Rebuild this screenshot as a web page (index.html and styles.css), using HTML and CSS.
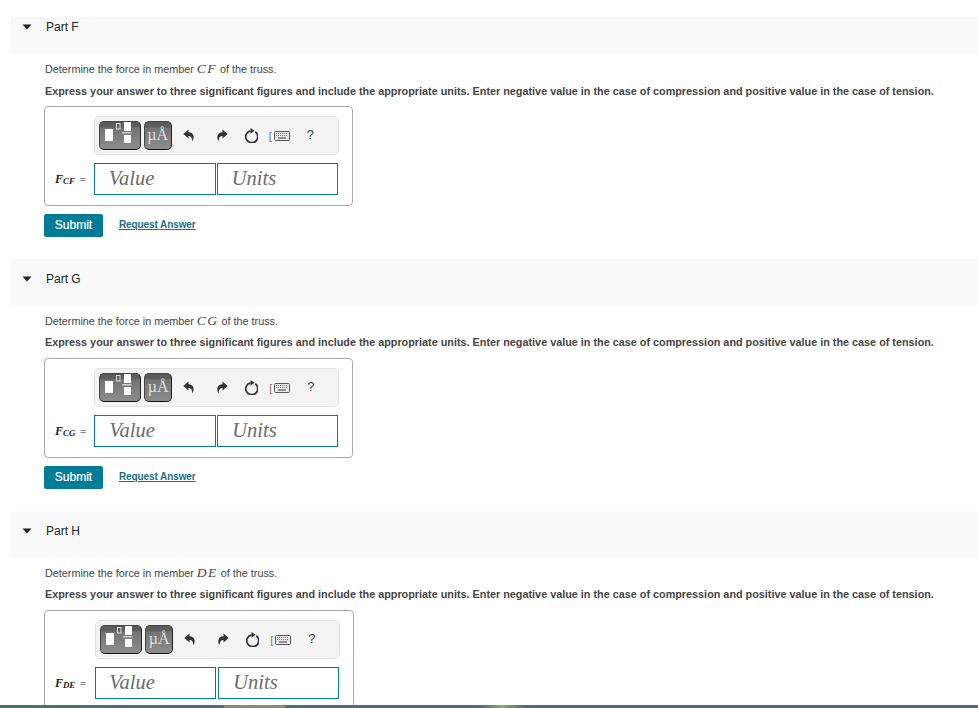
FILE: index.html
```html
<!DOCTYPE html>
<html lang="en">
<head>
<meta charset="utf-8">
<title>Parts F to H</title>
<link rel="stylesheet" href="styles.css">
</head>
<body>
<svg class="defs" width="0" height="0" aria-hidden="true">
  <defs>
    <symbol id="i-tpl" viewBox="0 0 42 29">
      <rect x="6" y="8" width="8" height="12" fill="#fff"/>
      <rect x="17.500" y="2.500" width="3.500" height="5.500" fill="none" stroke="#ddd" stroke-width="1"/>
      <rect x="25" y="1" width="7" height="9" fill="#fff"/>
      <rect x="23" y="11" width="9.500" height="1.500" fill="#ccc"/>
      <rect x="25" y="14" width="7" height="8" fill="#fff"/>
    </symbol>
    <symbol id="i-undo" viewBox="0 0 12 13">
      <path d="M5.500 0.500 0.300 5 5.500 9.500 5.500 7C8 7 9 8.500 9.500 12.500 11.800 8 10.800 3.500 5.500 3.300Z" fill="#333"/>
    </symbol>
    <symbol id="i-redo" viewBox="0 0 12 13">
      <path d="M6.500 0.500 11.700 5 6.500 9.500 6.500 7C4 7 3 8.500 2.500 12.500 0.200 8 1.200 3.500 6.500 3.300Z" fill="#333"/>
    </symbol>
    <symbol id="i-reset" viewBox="0 0 14 15">
      <path d="M11.300 3.800A6 6 0 1 1 6.500 2.800" fill="none" stroke="#333" stroke-width="1.700"/>
      <path d="M6.500 0 6.500 5.800 10.500 2.800Z" fill="#333"/>
    </symbol>
    <symbol id="i-keys" viewBox="0 0 16 10">
      <rect x="0.500" y="0.500" width="15" height="9" rx="1" fill="#e8e8e8" stroke="#555"/>
      <path d="M2 2.500H14M2 4.500H14" stroke="#777" stroke-width="1" stroke-dasharray="1 1"/>
      <path d="M4 7H12" stroke="#555" stroke-width="1.200"/>
    </symbol>
    <symbol id="i-caret" viewBox="0 0 10 6">
      <path d="M0.500 0.500H9.500L5 5.500Z" fill="#222"/>
    </symbol>
  </defs>
</svg>

<main class="page">
  <section class="part part-first">
    <header class="part-head"><svg class="caret"><use href="#i-caret"/></svg><h2 class="part-title">Part F</h2></header>
    <div class="part-body">
      <p class="prompt">Determine the force in member <var class="math">CF</var> of the truss.</p>
      <p class="instr">Express your answer to three significant figures and include the appropriate units. Enter negative value in the case of compression and positive value in the case of tension.</p>
      <div class="answer">
        <div class="toolbar">
          <span class="tool tool-tpl"><svg class="tpl-icon"><use href="#i-tpl"/></svg></span>
          <span class="tool tool-unit">µÅ</span>
          <svg class="ic ic-undo"><use href="#i-undo"/></svg>
          <svg class="ic ic-redo"><use href="#i-redo"/></svg>
          <svg class="ic ic-reset"><use href="#i-reset"/></svg>
          <span class="kbd"><span class="kbd-bracket">[</span><svg class="ic-keys"><use href="#i-keys"/></svg></span>
          <span class="help">?</span>
        </div>
        <label class="lbl"><i class="sym">F</i><i class="sub">CF</i> =</label>
        <div class="inputs"><span class="field field-value">Value</span><span class="field field-units">Units</span></div>
      </div>
      <div class="actions"><button class="submit" type="button">Submit</button><a class="req" href="#">Request Answer</a></div>
    </div>
  </section>

  <section class="part">
    <header class="part-head"><svg class="caret"><use href="#i-caret"/></svg><h2 class="part-title">Part G</h2></header>
    <div class="part-body">
      <p class="prompt">Determine the force in member <var class="math">CG</var> of the truss.</p>
      <p class="instr">Express your answer to three significant figures and include the appropriate units. Enter negative value in the case of compression and positive value in the case of tension.</p>
      <div class="answer">
        <div class="toolbar">
          <span class="tool tool-tpl"><svg class="tpl-icon"><use href="#i-tpl"/></svg></span>
          <span class="tool tool-unit">µÅ</span>
          <svg class="ic ic-undo"><use href="#i-undo"/></svg>
          <svg class="ic ic-redo"><use href="#i-redo"/></svg>
          <svg class="ic ic-reset"><use href="#i-reset"/></svg>
          <span class="kbd"><span class="kbd-bracket">[</span><svg class="ic-keys"><use href="#i-keys"/></svg></span>
          <span class="help">?</span>
        </div>
        <label class="lbl"><i class="sym">F</i><i class="sub">CG</i> =</label>
        <div class="inputs"><span class="field field-value">Value</span><span class="field field-units">Units</span></div>
      </div>
      <div class="actions"><button class="submit" type="button">Submit</button><a class="req" href="#">Request Answer</a></div>
    </div>
  </section>

  <section class="part part-last">
    <header class="part-head"><svg class="caret"><use href="#i-caret"/></svg><h2 class="part-title">Part H</h2></header>
    <div class="part-body">
      <p class="prompt">Determine the force in member <var class="math">DE</var> of the truss.</p>
      <p class="instr">Express your answer to three significant figures and include the appropriate units. Enter negative value in the case of compression and positive value in the case of tension.</p>
      <div class="answer">
        <div class="toolbar">
          <span class="tool tool-tpl"><svg class="tpl-icon"><use href="#i-tpl"/></svg></span>
          <span class="tool tool-unit">µÅ</span>
          <svg class="ic ic-undo"><use href="#i-undo"/></svg>
          <svg class="ic ic-redo"><use href="#i-redo"/></svg>
          <svg class="ic ic-reset"><use href="#i-reset"/></svg>
          <span class="kbd"><span class="kbd-bracket">[</span><svg class="ic-keys"><use href="#i-keys"/></svg></span>
          <span class="help">?</span>
        </div>
        <label class="lbl"><i class="sym">F</i><i class="sub">DE</i> =</label>
        <div class="inputs"><span class="field field-value">Value</span><span class="field field-units">Units</span></div>
      </div>
    </div>
  </section>
</main>
<div class="taskbar"></div>
</body>
</html>
```

FILE: styles.css
```css
* { box-sizing: border-box; }
html, body { margin: 0; padding: 0; height: 708px; overflow: hidden; background: #fff; }
body { font-family: "Liberation Sans", Arial, sans-serif; color: #333; }
.defs { position: absolute; }

.page { padding-top: 17px; padding-left: 11px; }

.part { height: 252px; }
.part-first { height: 242px; }
.part-last { height: 197px; overflow: hidden; }

.part-head {
  height: 47px;
  background: #f9f9f9;
  display: flex;
  align-items: flex-start;
  padding: 13px 0 0 11px;
}
.part-first .part-head { height: 37px; padding-top: 3px; }

.caret { width: 10px; height: 6px; margin-top: 4px; }
.part-title { margin: 0 0 0 14px; font-size: 12px; line-height: 15px; font-weight: 400; color: #222; }

.part-body { padding: 7px 0 0 33px; }

.prompt { margin: 0; height: 22px; font-size: 10.800px; line-height: 15px; color: #444; padding-left: 1px; }
.math { font-family: "Liberation Serif", serif; font-style: italic; font-size: 13.500px; letter-spacing: 1.500px; }
.instr { margin: 0; height: 23px; font-size: 10.800px; letter-spacing: 0.012px; line-height: 15px; color: #444; font-weight: 700; white-space: nowrap; padding-left: 1px; }
.part-first .instr { padding-top: 1px; }

.answer {
  width: fit-content;
  display: grid;
  grid-template-columns: auto auto;
  grid-template-rows: 39px 32px;
  row-gap: 8px;
  padding: 9px 14px 10px 10px;
  border: 1px solid #aaa;
  border-radius: 4px;
  height: 100px;
  background: #fff;
}
.toolbar {
  grid-column: 2;
  grid-row: 1;
  display: flex;
  align-items: center;
  margin-right: -1px;
  padding-left: 4px;
  background: #f3f3f3;
  border: 1px solid #e2e2e2;
  border-radius: 5px;
}
.tool {
  display: block;
  height: 29px;
  margin-top: -1px;
  border-radius: 5px;
  border: 1px solid #444;
  border-bottom-color: #111;
  border-right-color: #222;
  background: linear-gradient(#5a5a5a 0, #5f5f5f 5px, #747474 6px, #8c8c8c 100%);
}
.tool-tpl { width: 42px; }
.tpl-icon { display: block; width: 42px; height: 29px; margin: -1px; }
.tool-unit {
  width: 28px;
  margin-left: 3px;
  color: #e0e0e0;
  font-family: "Liberation Serif", serif;
  font-size: 16px;
  line-height: 25px;
  text-align: center;
}
.ic { display: block; flex: none; }
.ic-undo { width: 12px; height: 13px; margin-left: 11px; }
.ic-redo { width: 12px; height: 13px; margin-left: 21px; }
.ic-reset { width: 14px; height: 15px; margin-left: 16px; }
.kbd { display: flex; align-items: center; margin-left: 11px; color: #777; font-size: 10px; }
.kbd-bracket { width: 4px; font-size: 11px; }
.ic-keys { display: block; width: 16px; height: 10px; margin-left: 1px; }
.help { margin-left: 17px; font-size: 13px; color: #444; line-height: 15px; margin-top: -3px; }

.lbl {
  grid-column: 1;
  grid-row: 2;
  align-self: center;
  margin-right: 8px;
  font-family: "Liberation Serif", serif;
  font-size: 11px;
  color: #222;
  white-space: nowrap;
}
.part-last .lbl { margin-right: 9px; }
.sym { font-weight: 700; font-size: 12px; }
.sub { font-size: 8.800px; font-weight: 700; vertical-align: -1px; margin-right: 2px; }

.inputs { grid-column: 2; grid-row: 2; display: flex; gap: 1px; }
.part-last .inputs { gap: 2px; }
.field {
  height: 32px;
  border: 1px solid #007c99;
  font-family: "Liberation Serif", serif;
  font-style: italic;
  font-size: 20.500px;
  line-height: 28px;
  color: #6b6b6b;
  background: #fff;
}
.field-value { width: 122px; padding-left: 14px; }
.field-units { width: 121px; padding-left: 14px; }
.part-last .field-value { width: 121px; padding-left: 13px; }

.actions { display: flex; align-items: center; margin-top: 8px; height: 23px; }
.submit {
  width: 59px;
  height: 23px;
  padding: 0 0 2px;
  border: 0;
  border-radius: 2px;
  background: #007c99;
  color: #fff;
  font-family: "Liberation Sans", Arial, sans-serif;
  font-size: 12px;
  -webkit-text-stroke: 0.2px #fff;
}
.req {
  margin-left: 16px;
  margin-bottom: 1px;
  font-size: 10px;
  line-height: 12px;
  font-weight: 700;
  letter-spacing: -0.1px;
  color: #1a6f8a;
}

.taskbar {
  position: fixed;
  left: 0;
  right: 0;
  bottom: 0;
  height: 3px;
  background:
    linear-gradient(90deg, transparent 224px, #8a8a78 224px, #8a8a78 285px, transparent 285px),
    linear-gradient(90deg, #3f7a66 0, #44736f 110px, #44736f 480px, #86ac70 502px, #44736f 525px, #44736f 100%);
}
```
